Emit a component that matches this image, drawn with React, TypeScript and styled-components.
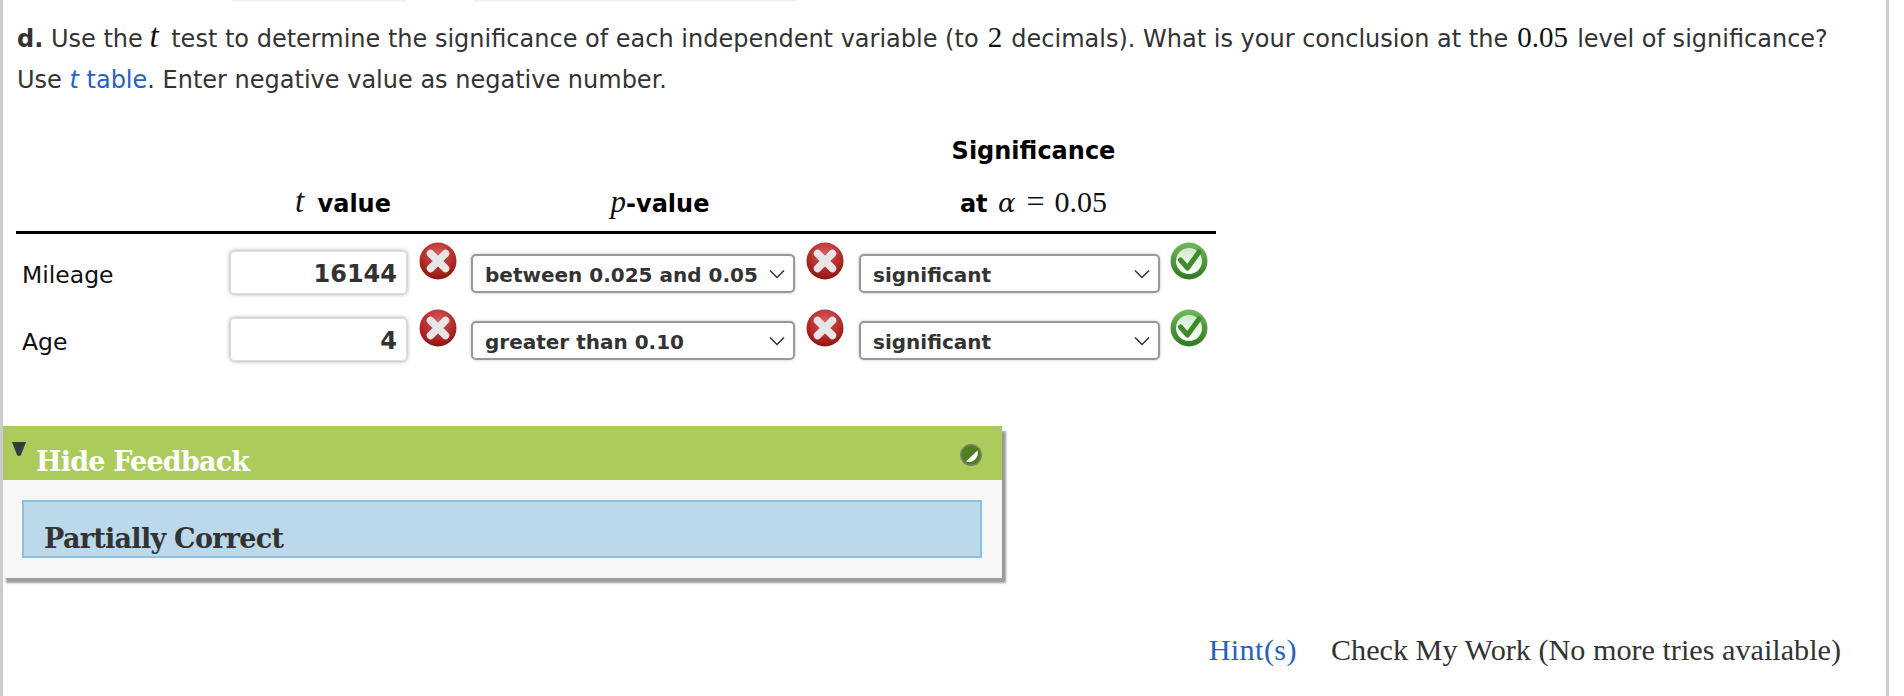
import styled, { createGlobalStyle } from "styled-components";

const GlobalStyle = createGlobalStyle`
  html, body {
    margin: 0;
    padding: 0;
    background: #ffffff;
  }
`;

const Page = styled.main`
  box-sizing: border-box;
  width: 1889px;
  height: 696px;
  overflow: hidden;
  border-left: 3px solid #cccccc;
  border-right: 3px solid #cccccc;
  font-family: "DejaVu Sans", Verdana, sans-serif;
  color: #333333;
`;

const TopEdge = styled.div`
  display: flex;
  height: 2px;
  padding-left: 229px;
  gap: 67px;
`;

const EdgeShadow = styled.span<{ $width: number }>`
  width: ${(p) => p.$width}px;
  background: linear-gradient(180deg, #ececec, #fdfdfd);
`;

const Prompt = styled.p`
  margin: 0;
  padding: 14px 0 0 14px;
  font-size: 24px;
  line-height: 41px;
  height: 108px;
  white-space: nowrap;
`;

const Math = styled.span`
  margin: 0 1.5px;
  font-family: "Liberation Serif", "Times New Roman", serif;
  font-size: 29px;
  font-weight: 400;
  color: #111111;
`;

const TVar = styled(Math)`
  margin: 0 5px 0 -1px;
  font-size: 33px;
  font-style: italic;
`;

const PVar = styled(Math)`
  margin: 0;
  font-size: 31px;
  font-style: italic;
`;

const Alpha = styled(Math)`
  margin: 0 0 0 2px;
  font-family: "DejaVu Serif", serif;
  font-size: 26px;
  font-style: italic;
`;

const Equals = styled(Math)`
  margin: 0 10px 0 11px;
  font-size: 32px;
`;

const Level = styled(Math)`
  margin: 0;
  font-size: 30px;
`;

const Link = styled.a`
  color: #2463bd;
  text-decoration: none;
`;

const Table = styled.section`
  margin-left: 13px;
  width: 1200px;
`;

const Row = styled.div<{ $header?: boolean }>`
  display: grid;
  grid-template-columns: 214px 241px 388px 357px;
  align-items: ${(p) => (p.$header ? "end" : "start")};
`;

const HeadRow = styled(Row)`
  height: 110px;
  border-bottom: 3px solid #000000;
  box-sizing: border-box;
  padding-top: 1px;
`;

const HeadCell = styled.div<{ $pad: number }>`
  padding: 0 ${(p) => p.$pad}px 2px 0;
  text-align: center;
  font-weight: 700;
  font-size: 24px;
  line-height: 50px;
  color: #000000;
  white-space: nowrap;
`;

const BodyRow = styled(Row)`
  height: 67px;
  padding-top: 8px;
  box-sizing: border-box;
`;

const RowLabel = styled.div`
  padding: 17px 0 0 6px;
  font-size: 23.5px;
  line-height: 32px;
  color: #111111;
`;

const Cell = styled.div`
  display: flex;
  align-items: flex-start;
`;

const ValueInput = styled.input`
  box-sizing: border-box;
  width: 177px;
  height: 43px;
  margin: 9px 12px 0 0;
  padding: 2px 9px 0;
  border: 1px solid #dddddd;
  border-radius: 4px;
  box-shadow: 0 0 4px rgba(0, 0, 0, 0.4);
  background: #ffffff;
  text-align: right;
  font-family: inherit;
  font-size: 24px;
  font-weight: 700;
  color: #333333;
`;

const SelectWrap = styled.div<{ $width: number; $gap: number }>`
  position: relative;
  width: ${(p) => p.$width}px;
  margin: 12px ${(p) => p.$gap}px 0 0;
`;

const Select = styled.select`
  box-sizing: border-box;
  display: block;
  width: 100%;
  height: 39px;
  padding: 2px 0 0 12px;
  appearance: none;
  border: 2px solid #999999;
  border-radius: 5px;
  box-shadow: 0 0 3px rgba(0, 0, 0, 0.25);
  background: #ffffff;
  font-family: inherit;
  font-size: 20px;
  font-weight: 700;
  color: #333333;
`;

const Chevron = styled.svg`
  position: absolute;
  right: 10px;
  top: 15px;
  width: 16px;
  height: 10px;
  pointer-events: none;
`;

const Mark = styled.svg`
  flex: none;
  width: 38px;
  height: 38px;
`;

const Feedback = styled.section`
  width: 1000px;
  margin-top: 58px;
  margin-left: -1px;
  background: #f7f7f7;
  box-shadow: 4px 5px 2px #9b9b9b;
`;

const FeedbackBar = styled.header`
  position: relative;
  display: flex;
  align-items: flex-end;
  height: 54px;
  padding-left: 34px;
  background: #abcc5a;
`;

const FeedbackTitle = styled.h2`
  margin: 0;
  font-family: "DejaVu Serif", Georgia, serif;
  font-size: 27px;
  line-height: 36px;
  font-weight: 700;
  letter-spacing: -0.8px;
  color: #ffffff;
`;

const Caret = styled.svg`
  position: absolute;
  left: 10px;
  top: 16px;
  width: 14px;
  height: 14px;
`;

const CollapseDot = styled.svg`
  position: absolute;
  right: 20px;
  top: 18px;
  width: 22px;
  height: 22px;
`;

const FeedbackBody = styled.div`
  height: 98px;
  box-sizing: border-box;
  padding: 20px 20px 0;
`;

const Verdict = styled.div`
  box-sizing: border-box;
  height: 58px;
  padding: 19px 0 0 20px;
  border: 2px solid #8dc0de;
  background: #bbd9eb;
  font-family: "DejaVu Serif", Georgia, serif;
  font-size: 27px;
  line-height: 36px;
  font-weight: 700;
  letter-spacing: -0.7px;
  color: #333333;
`;

const Actions = styled.footer`
  display: flex;
  justify-content: flex-end;
  gap: 34px;
  margin-top: 52px;
  padding-right: 45px;
  font-family: "Liberation Serif", Georgia, serif;
  font-size: 30.2px;
  line-height: 40px;
  white-space: nowrap;
`;

const HintLink = styled.a`
  color: #2463bd;
  text-decoration: none;
  letter-spacing: 0.4px;
`;

const CheckWork = styled.span`
  color: #333333;
`;

const WrongMark = () => (
  <Mark viewBox="0 0 38 38">
    <defs>
      <radialGradient id="wrongFill" cx="50%" cy="30%" r="75%">
        <stop offset="0%" stopColor="#d85a5a" />
        <stop offset="60%" stopColor="#b32a2a" />
        <stop offset="100%" stopColor="#851008" />
      </radialGradient>
      <filter id="wrongSoft" filterUnits="userSpaceOnUse" x="0" y="0" width="38" height="38">
        <feGaussianBlur stdDeviation="0.7" />
      </filter>
    </defs>
    <circle cx="19" cy="19" r="18.5" fill="url(#wrongFill)" />
    <path
      d="M11.5 11.5 L26.5 26.5 M26.5 11.5 L11.5 26.5"
      stroke="#e6e6e6"
      strokeWidth="7.5"
      strokeLinecap="round"
      filter="url(#wrongSoft)"
    />
  </Mark>
);

const RightMark = () => (
  <Mark viewBox="0 0 38 38">
    <defs>
      <linearGradient id="rightFill" x1="0" y1="0" x2="0" y2="1">
        <stop offset="0%" stopColor="#6fb85e" />
        <stop offset="100%" stopColor="#2f7a1c" />
      </linearGradient>
      <linearGradient id="rightCore" x1="0" y1="0" x2="0" y2="1">
        <stop offset="0%" stopColor="#cfeacd" />
        <stop offset="100%" stopColor="#ffffff" />
      </linearGradient>
      <filter id="rightSoft" filterUnits="userSpaceOnUse" x="0" y="0" width="38" height="38">
        <feGaussianBlur stdDeviation="0.5" />
      </filter>
    </defs>
    <circle cx="19" cy="19" r="18.5" fill="url(#rightFill)" />
    <circle cx="19" cy="19" r="13" fill="url(#rightCore)" filter="url(#rightSoft)" />
    <path
      d="M10.5 18 L17.5 26 L29 10"
      fill="none"
      stroke="#3f8a2b"
      strokeWidth="5"
      strokeLinecap="round"
      strokeLinejoin="round"
      filter="url(#rightSoft)"
    />
  </Mark>
);

const DownChevron = () => (
  <Chevron viewBox="0 0 16 10">
    <path d="M1 1.5 L8 8.5 L15 1.5" fill="none" stroke="#333333" strokeWidth="1.5" />
  </Chevron>
);

type Answer = {
  label: string;
  t: string;
  p: string;
};

const answers: Answer[] = [
  { label: "Mileage", t: "16144", p: "between 0.025 and 0.05" },
  { label: "Age", t: "4", p: "greater than 0.10" },
];

export default function App() {
  return (
    <Page>
      <GlobalStyle />
      <TopEdge>
        <EdgeShadow $width={175} />
        <EdgeShadow $width={322} />
      </TopEdge>
      <Prompt>
        <b>d.</b> Use the <TVar>t</TVar> test to determine the significance of each independent variable (to{" "}
        <Math>2</Math> decimals). What is your conclusion at the <Math>0.05</Math> level of significance?
        <br />
        Use <Link href="#"><i>t</i> table</Link>. Enter negative value as negative number.
      </Prompt>
      <Table>
        <HeadRow $header>
          <div />
          <HeadCell $pad={14}>
            <TVar>t</TVar> value
          </HeadCell>
          <HeadCell $pad={10}>
            <PVar>p</PVar>-value
          </HeadCell>
          <HeadCell $pad={8}>
            Significance
            <br />
            at <Alpha>α</Alpha>
            <Equals>=</Equals>
            <Level>0.05</Level>
          </HeadCell>
        </HeadRow>
        {answers.map((a) => (
          <BodyRow key={a.label}>
            <RowLabel>{a.label}</RowLabel>
            <Cell>
              <ValueInput defaultValue={a.t} />
              <WrongMark />
            </Cell>
            <Cell>
              <SelectWrap $width={324} $gap={11}>
                <Select defaultValue={a.p}>
                  <option>{a.p}</option>
                </Select>
                <DownChevron />
              </SelectWrap>
              <WrongMark />
            </Cell>
            <Cell>
              <SelectWrap $width={301} $gap={10}>
                <Select defaultValue="significant">
                  <option>significant</option>
                </Select>
                <DownChevron />
              </SelectWrap>
              <RightMark />
            </Cell>
          </BodyRow>
        ))}
      </Table>
      <Feedback>
        <FeedbackBar>
          <Caret viewBox="0 0 14 14">
            <path d="M0 0 H14 L9 13 Q7 15 5 13 Z" fill="#333d40" />
          </Caret>
          <FeedbackTitle>Hide Feedback</FeedbackTitle>
          <CollapseDot viewBox="0 0 22 22">
            <circle cx="11" cy="11" r="10.2" fill="#4f7f1c" stroke="#75806a" strokeWidth="1.5" />
            <path d="M6 17.5 L17.5 6.5 A9 9 0 0 1 6 17.5 Z" fill="#ffffff" />
          </CollapseDot>
        </FeedbackBar>
        <FeedbackBody>
          <Verdict>Partially Correct</Verdict>
        </FeedbackBody>
      </Feedback>
      <Actions>
        <HintLink href="#">Hint(s)</HintLink>
        <CheckWork>Check My Work (No more tries available)</CheckWork>
      </Actions>
    </Page>
  );
}
